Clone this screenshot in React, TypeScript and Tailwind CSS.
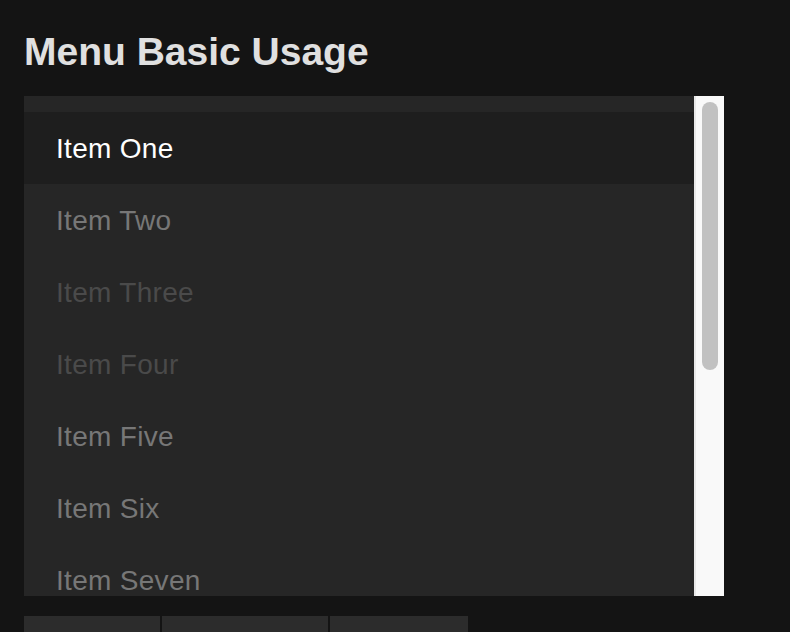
import React from "react";

const items = [
  { label: "Item One", state: "active" },
  { label: "Item Two", state: "normal" },
  { label: "Item Three", state: "disabled" },
  { label: "Item Four", state: "disabled" },
  { label: "Item Five", state: "normal" },
  { label: "Item Six", state: "normal" },
  { label: "Item Seven", state: "normal" },
];

const App = () => {
  return (
    <div className="min-h-[632px] h-[632px] overflow-hidden bg-[#141414] pl-6 pt-[30px] font-['Liberation_Sans',Arial,sans-serif]">
      <h1 className="text-[39px] leading-[44px] font-bold text-[#e0e0e0]">
        Menu Basic Usage
      </h1>

      {/* Menu list with its scrollbar */}
      <div className="mt-[22px] flex h-[500px] w-[700px] overflow-hidden">
        <ul className="flex-1 bg-[#262626] pt-4">
          {items.map((item) => (
            <li
              key={item.label}
              className={
                item.state === "active"
                  ? "flex h-[72px] items-center bg-[#1e1e1e] pl-[32px] pt-[2px] text-[28px] tracking-[0.3px] text-white"
                  : item.state === "disabled"
                  ? "flex h-[72px] items-center pl-[32px] pt-[2px] text-[28px] tracking-[0.3px] text-[#4a4a4a]"
                  : "flex h-[72px] items-center pl-[32px] pt-[2px] text-[28px] tracking-[0.3px] text-[#777777]"
              }
            >
              {item.label}
            </li>
          ))}
        </ul>
        <div className="w-[30px] border-l-2 border-[#e8e8e8] bg-[#f9f9f9] pl-[6px] pt-[6px]">
          <div className="h-[268px] w-4 rounded-full bg-[#c1c1c1]" />
        </div>
      </div>

      {/* Tabs peeking below */}
      <div className="mt-5 flex gap-[2px]">
        <div className="h-10 w-[136px] bg-[#2c2c2c]" />
        <div className="h-10 w-[166px] bg-[#2c2c2c]" />
        <div className="h-10 w-[138px] bg-[#2c2c2c]" />
      </div>
    </div>
  );
};

export default App;
